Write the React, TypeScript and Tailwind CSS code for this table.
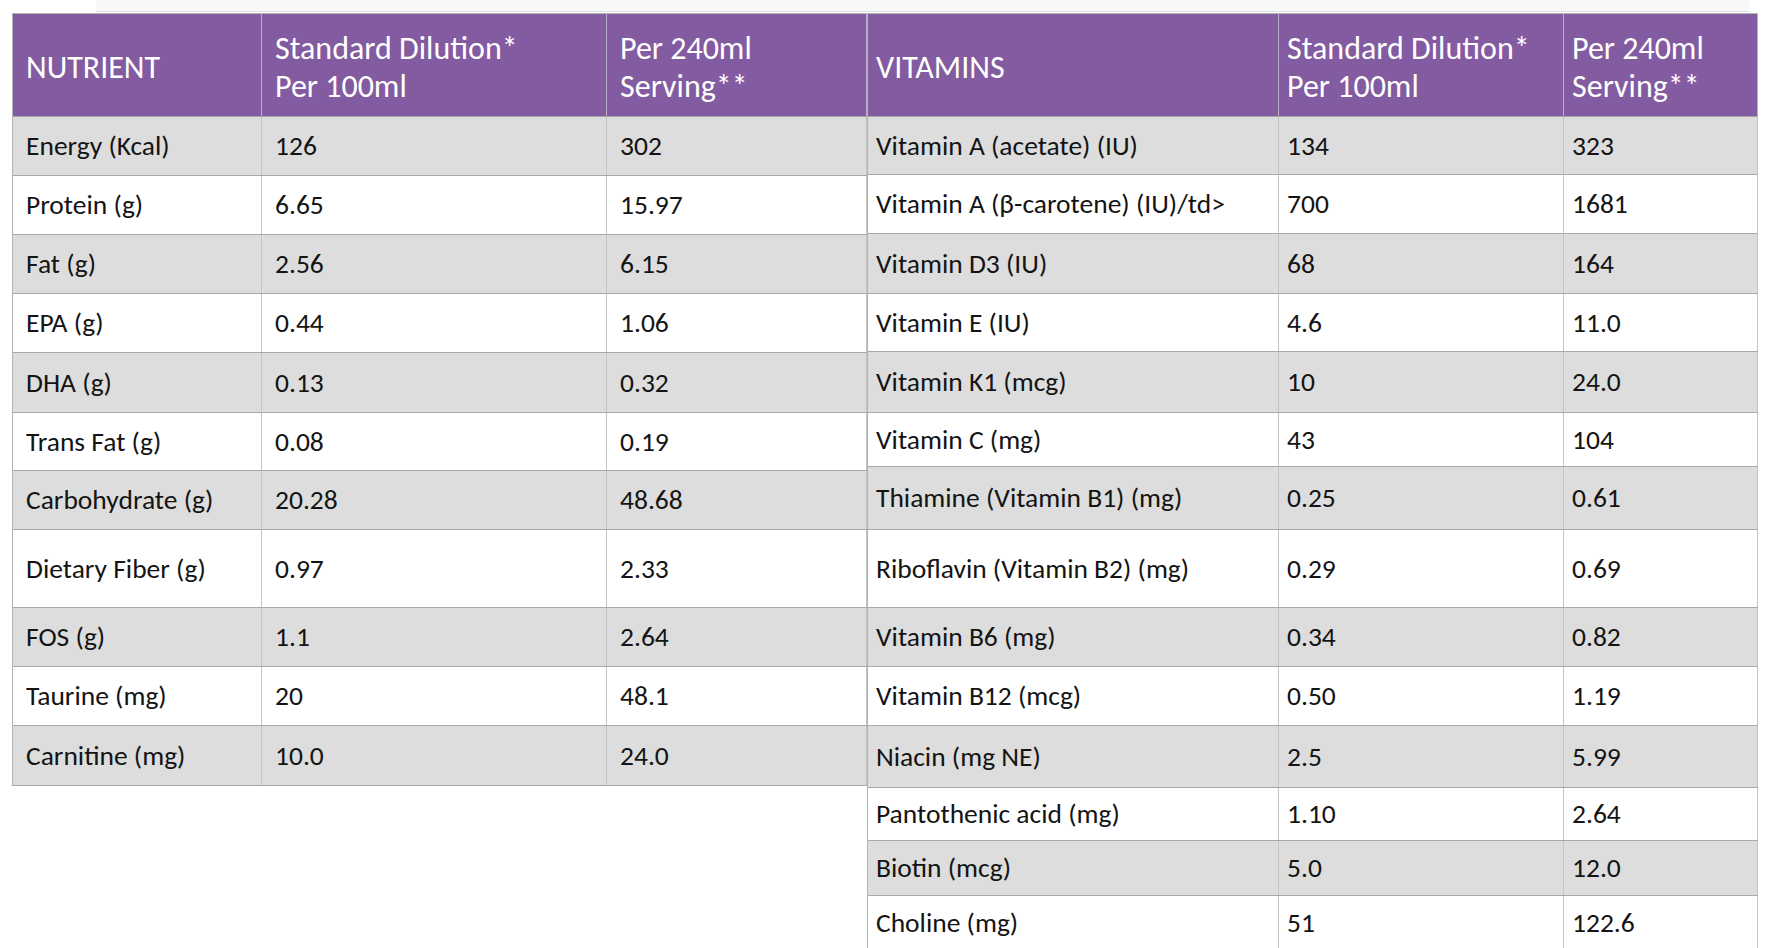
import React from "react";

type Row = { name: string; a: string; b: string; h: string; gray: boolean };

const leftRows: Row[] = [
  { name: "Energy (Kcal)", a: "126", b: "302", h: "h-[59px]", gray: true },
  { name: "Protein (g)", a: "6.65", b: "15.97", h: "h-[59px]", gray: false },
  { name: "Fat (g)", a: "2.56", b: "6.15", h: "h-[59px]", gray: true },
  { name: "EPA (g)", a: "0.44", b: "1.06", h: "h-[59px]", gray: false },
  { name: "DHA (g)", a: "0.13", b: "0.32", h: "h-[60px]", gray: true },
  { name: "Trans Fat (g)", a: "0.08", b: "0.19", h: "h-[58px]", gray: false },
  { name: "Carbohydrate (g)", a: "20.28", b: "48.68", h: "h-[59px]", gray: true },
  { name: "Dietary Fiber (g)", a: "0.97", b: "2.33", h: "h-[78px]", gray: false },
  { name: "FOS (g)", a: "1.1", b: "2.64", h: "h-[59px]", gray: true },
  { name: "Taurine (mg)", a: "20", b: "48.1", h: "h-[59px]", gray: false },
  { name: "Carnitine (mg)", a: "10.0", b: "24.0", h: "h-[60px]", gray: true },
];

const rightRows: Row[] = [
  { name: "Vitamin A (acetate) (IU)", a: "134", b: "323", h: "h-[58px]", gray: true },
  { name: "Vitamin A (\u03b2-carotene) (IU)/td>", a: "700", b: "1681", h: "h-[59px]", gray: false },
  { name: "Vitamin D3 (IU)", a: "68", b: "164", h: "h-[60px]", gray: true },
  { name: "Vitamin E (IU)", a: "4.6", b: "11.0", h: "h-[58px]", gray: false },
  { name: "Vitamin K1 (mcg)", a: "10", b: "24.0", h: "h-[61px]", gray: true },
  { name: "Vitamin C (mg)", a: "43", b: "104", h: "h-[54px]", gray: false },
  { name: "Thiamine (Vitamin B1) (mg)", a: "0.25", b: "0.61", h: "h-[63px]", gray: true },
  { name: "Riboflavin (Vitamin B2) (mg)", a: "0.29", b: "0.69", h: "h-[78px]", gray: false },
  { name: "Vitamin B6 (mg)", a: "0.34", b: "0.82", h: "h-[59px]", gray: true },
  { name: "Vitamin B12 (mcg)", a: "0.50", b: "1.19", h: "h-[59px]", gray: false },
  { name: "Niacin (mg NE)", a: "2.5", b: "5.99", h: "h-[62px]", gray: true },
  { name: "Pantothenic acid (mg)", a: "1.10", b: "2.64", h: "h-[53px]", gray: false },
  { name: "Biotin (mcg)", a: "5.0", b: "12.0", h: "h-[55px]", gray: true },
  { name: "Choline (mg)", a: "51", b: "122.6", h: "h-[55px]", gray: false },
];

function Table({
  title,
  rows,
  widths,
  tableW,
  pad,
}: {
  title: string;
  rows: Row[];
  widths: [string, string, string];
  tableW: string;
  pad: string;
}) {
  return (
    <div className={`${tableW} flex flex-col border-l border-t border-[#b3b3b3] shrink-0`}>
      <div className="flex h-[103px] bg-[#835ba0] text-white text-[32px] leading-[38px] border-b border-[#a3a3a3]">
        <div className={`${widths[0]} flex items-center ${pad} border-r border-[#b9aec4] pt-[6px]`}>{title}</div>
        <div className={`${widths[1]} flex flex-col justify-center ${pad} border-r border-[#b9aec4] pt-[6px] whitespace-nowrap`}>
          <span>Standard Dilution*</span>
          <span>Per 100ml</span>
        </div>
        <div className={`${widths[2]} flex flex-col justify-center ${pad} border-r border-[#b9aec4] pt-[6px] whitespace-nowrap`}>
          <span>Per 240ml</span>
          <span>Serving**</span>
        </div>
      </div>
      {rows.map((r) => (
        <div
          key={r.name}
          className={`flex ${r.h} border-b border-[#a8a8a8] text-[27.5px] text-[#141414] ${
            r.gray ? "bg-[#dcdddc]" : "bg-white"
          }`}
        >
          <div className={`${widths[0]} flex items-center ${pad} border-r border-[#c4c4c4] whitespace-nowrap`}>{r.name}</div>
          <div className={`${widths[1]} flex items-center ${pad} border-r border-[#c4c4c4]`}>{r.a}</div>
          <div className={`${widths[2]} flex items-center ${pad} border-r border-[#c4c4c4]`}>{r.b}</div>
        </div>
      ))}
    </div>
  );
}

export default function App() {
  return (
    <div
      className="w-[1770px] h-[948px] overflow-hidden bg-white flex flex-col"
      style={{ fontFamily: "Carlito, Lato, 'Open Sans', sans-serif" }}
    >
      <div className="ml-[96px] w-[1653px] h-[12px] bg-[#f8f8f8] border-b border-[#dfe3e8] shrink-0" />
      <div className="flex items-start pl-[12px] mt-[1px]">
        <Table
          title="NUTRIENT"
          rows={leftRows}
          widths={["w-[249px]", "w-[345px]", "w-[260px]"]}
          tableW="w-[855px]"
          pad="pl-[13px]"
        />
        <Table
          title="VITAMINS"
          rows={rightRows}
          widths={["w-[411px]", "w-[285px]", "w-[194px]"]}
          tableW="w-[891px]"
          pad="pl-[8px]"
        />
      </div>
    </div>
  );
}
